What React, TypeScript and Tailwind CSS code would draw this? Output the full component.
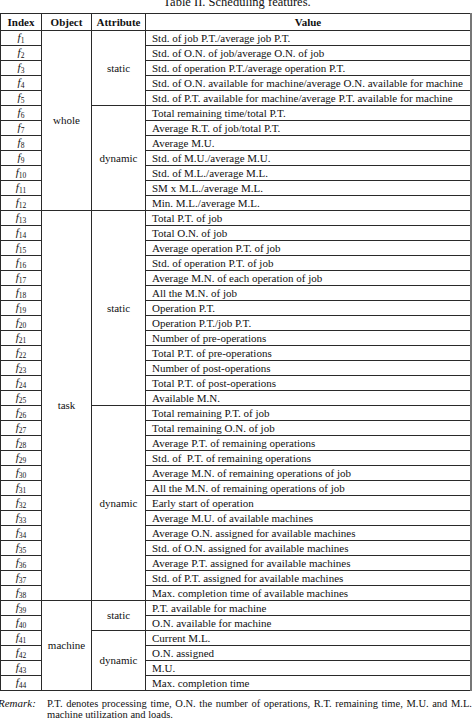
import React from "react";

type Group = {
  object: string;
  parts: { attribute: string; values: string[] }[];
};

const groups: Group[] = [
  {
    object: "whole",
    parts: [
      {
        attribute: "static",
        values: [
          "Std. of job P.T./average job P.T.",
          "Std. of O.N. of job/average O.N. of job",
          "Std. of operation P.T./average operation P.T.",
          "Std. of O.N. available for machine/average O.N. available for machine",
          "Std. of P.T. available for machine/average P.T. available for machine",
        ],
      },
      {
        attribute: "dynamic",
        values: [
          "Total remaining time/total P.T.",
          "Average R.T. of job/total P.T.",
          "Average M.U.",
          "Std. of M.U./average M.U.",
          "Std. of M.L./average M.L.",
          "SM x M.L./average M.L.",
          "Min. M.L./average M.L.",
        ],
      },
    ],
  },
  {
    object: "task",
    parts: [
      {
        attribute: "static",
        values: [
          "Total P.T. of job",
          "Total O.N. of job",
          "Average operation P.T. of job",
          "Std. of operation P.T. of job",
          "Average M.N. of each operation of job",
          "All the M.N. of job",
          "Operation P.T.",
          "Operation P.T./job P.T.",
          "Number of pre-operations",
          "Total P.T. of pre-operations",
          "Number of post-operations",
          "Total P.T. of post-operations",
          "Available M.N.",
        ],
      },
      {
        attribute: "dynamic",
        values: [
          "Total remaining P.T. of job",
          "Total remaining O.N. of job",
          "Average P.T. of remaining operations",
          "Std. of  P.T. of remaining operations",
          "Average M.N. of remaining operations of job",
          "All the M.N. of remaining operations of job",
          "Early start of operation",
          "Average M.U. of available machines",
          "Average O.N. assigned for available machines",
          "Std. of O.N. assigned for available machines",
          "Average P.T. assigned for available machines",
          "Std. of P.T. assigned for available machines",
          "Max. completion time of available machines",
        ],
      },
    ],
  },
  {
    object: "machine",
    parts: [
      {
        attribute: "static",
        values: ["P.T. available for machine", "O.N. available for machine"],
      },
      {
        attribute: "dynamic",
        values: ["Current M.L.", "O.N. assigned", "M.U.", "Max. completion time"],
      },
    ],
  },
];

const cell = "border border-[#2a2a2a] p-0 leading-none";

export default function App() {
  let index = 0;
  const rows: React.ReactNode[] = [];

  groups.forEach((group) => {
    const groupSize = group.parts.reduce((n, p) => n + p.values.length, 0);
    group.parts.forEach((part, pi) => {
      part.values.forEach((value, vi) => {
        index += 1;
        rows.push(
          <tr key={index} className="h-[15px]">
            <td className={`${cell} text-center`}>
              <span className="italic">f</span>
              <span className="text-[7.5px] align-[-2px]">{index}</span>
            </td>
            {pi === 0 && vi === 0 && (
              <td className={`${cell} text-center`} rowSpan={groupSize}>
                {group.object}
              </td>
            )}
            {vi === 0 && (
              <td className={`${cell} text-center`} rowSpan={part.values.length}>
                {part.attribute}
              </td>
            )}
            <td className={`${cell} pl-[6px] whitespace-pre`}>{value}</td>
          </tr>,
        );
      });
    });
  });

  return (
    <div className="w-[474px] h-[718px] overflow-hidden bg-white text-[#111] font-[family-name:Liberation_Serif,serif] text-[11px]">
      <div className="text-center text-[12.5px] leading-none -mt-[4px] h-[17px]">
        Table II. Scheduling features.
      </div>
      <table className="border-collapse w-[472px] table-fixed border-r-2 border-r-[#777]">
        <colgroup>
          <col className="w-[41px]" />
          <col className="w-[50px]" />
          <col className="w-[54px]" />
          <col />
        </colgroup>
        <thead>
          <tr className="h-[17px] font-bold">
            <th className={cell}>Index</th>
            <th className={cell}>Object</th>
            <th className={cell}>Attribute</th>
            <th className={cell}>Value</th>
          </tr>
        </thead>
        <tbody>{rows}</tbody>
      </table>
      <div className="flex mt-[7px] leading-[11px]">
        <div className="w-[49px] shrink-0 italic -ml-[2px]">Remark:</div>
        <div className="flex-1 pr-[2px] text-[10.5px]">
          <div className="text-justify [text-align-last:justify]">
            P.T. denotes processing time, O.N. the number of operations, R.T. remaining time, M.U. and M.L.
          </div>
          <div>machine utilization and loads.</div>
        </div>
      </div>
    </div>
  );
}
